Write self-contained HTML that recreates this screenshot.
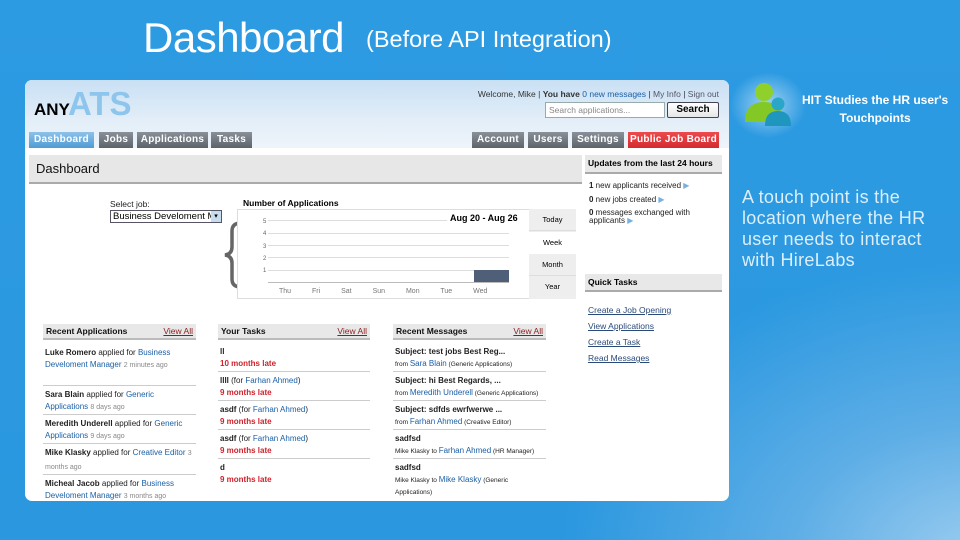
<!DOCTYPE html>
<html><head><meta charset="utf-8"><style>
*{margin:0;padding:0;box-sizing:border-box}
body{width:960px;height:540px;overflow:hidden;position:relative;font-family:"Liberation Sans",Arial,sans-serif;background:radial-gradient(ellipse 420px 300px at 980px 560px,#9ccdf0 0%,#5eaee6 45%,rgba(42,152,224,0) 100%),linear-gradient(180deg,#2d9be2 0%,#2a97df 100%)}
.a{position:absolute;white-space:nowrap}
.panel{position:absolute;left:25px;top:80px;width:704px;height:421px;background:#fff;border-radius:7px;overflow:hidden}
.hdr{position:absolute;left:0;top:0;width:704px;height:68px;background:linear-gradient(180deg,#c9e0f4 0%,#e3eef8 60%,#eef4fa 100%)}
.tab{position:absolute;top:52px;height:16px;color:#fff;font-weight:bold;font-size:10px;text-align:center;line-height:16px;background:linear-gradient(#8a9098,#5c636b);letter-spacing:.3px}
.s{font-size:8px;color:#222}
.lk{color:#1a5fa6}
.gr{color:#888;font-size:7px}
.rd{color:#d0202a;font-weight:bold;font-size:8px}
.bh{position:absolute;height:16px;background:#e8e8e8;border-bottom:2px solid #bbb;font-size:8.5px;font-weight:bold;line-height:15px;padding-left:3px;color:#111}
.bh u{position:absolute;right:3px;top:0;color:#8a1d1d;font-weight:normal}
.sep{position:absolute;height:1px;background:#ccc}
</style></head><body>
<div class="a" style="left:143px;top:14px;font-size:42px;color:#fff;font-weight:300;letter-spacing:-.5px">Dashboard</div>
<div class="a" style="left:366px;top:26px;font-size:23.5px;color:#fff">(Before API Integration)</div>

<div class="panel">
<div class="hdr"></div>
<div class="a" style="left:9px;top:20px;font-size:17px;font-weight:bold;color:#000">ANY</div>
<div class="a" style="left:43px;top:5px;font-size:33px;font-weight:bold;color:#8ec5ec">ATS</div>
<div class="a" style="right:10px;top:9px;font-size:8.5px;color:#333">Welcome, Mike | <b>You have</b> <span class="lk">0 new messages</span> | <span style="color:#556">My Info</span> | <span style="color:#556">Sign out</span></div>
<div class="a" style="left:520px;top:22px;width:120px;height:16px;border:1px solid #9aa;background:#fff;font-size:8.5px;color:#888;padding:2px 3px">Search applications...</div>
<div class="a" style="left:642px;top:22px;width:52px;height:16px;border:1px solid #445;border-radius:2px;background:linear-gradient(#fff,#e6e6e6);font-size:10px;font-weight:bold;text-align:center;line-height:14px">Search</div>
<div class="tab" style="left:4px;width:65px;background:linear-gradient(#8dc2ea,#4f9bd4)">Dashboard</div>
<div class="tab" style="left:74px;width:34px">Jobs</div>
<div class="tab" style="left:112px;width:71px">Applications</div>
<div class="tab" style="left:186px;width:41px">Tasks</div>
<div class="tab" style="left:447px;width:52px">Account</div>
<div class="tab" style="left:503px;width:40px">Users</div>
<div class="tab" style="left:547px;width:52px">Settings</div>
<div class="tab" style="left:603px;width:91px;background:linear-gradient(#ec4a4e,#d42a30)">Public Job Board</div>

<div class="a" style="left:4px;top:75px;width:553px;height:29px;background:#e7e7e7;border-bottom:2px solid #aaa;font-size:13px;line-height:27px;padding-left:7px;color:#111">Dashboard</div>
<div class="a" style="left:560px;top:75px;width:137px;height:19px;background:#e8e8e8;border-bottom:2px solid #aaa;font-size:8.5px;font-weight:bold;line-height:17px;padding-left:3px">Updates from the last 24 hours</div>
<div class="a s" style="left:564px;top:101px;font-size:8px"><b>1</b> new applicants received <span style="color:#7ab0e0">▶</span></div>
<div class="a s" style="left:564px;top:115px;font-size:8px"><b>0</b> new jobs created <span style="color:#7ab0e0">▶</span></div>
<div class="a s" style="left:564px;top:129px;font-size:8px;line-height:8px;white-space:normal;width:130px"><b>0</b> messages exchanged with applicants <span style="color:#7ab0e0">▶</span></div>

<div class="a s" style="left:85px;top:119px;font-size:8.5px">Select job:</div>
<div class="a" style="left:85px;top:130px;width:112px;height:13px;border:1px solid #556;font-size:9.5px;line-height:11px;padding-left:2px;background:#fff;overflow:hidden">Business Develoment M<span style="position:absolute;right:0;top:0;width:10px;height:11px;background:#c8dcf0;font-size:7px;text-align:center">▾</span></div>
<svg class="a" style="left:197px;top:141px" width="22" height="68" viewBox="0 0 22 68"><path d="M19 2 Q10 2 10 10 L10 26 Q10 33 3 34 Q10 35 10 42 L10 58 Q10 66 19 66" fill="none" stroke="#666" stroke-width="3.5"/></svg>
<div class="a" style="left:218px;top:118px;font-size:8.5px;font-weight:bold">Number of Applications</div>
<div class="a" style="left:212px;top:129px;width:339px;height:90px;border:1px solid #ddd;background:#fff"></div>
<div class="a" style="left:504px;top:129px;width:47px;height:90px;background:#eee"></div>
<div class="a" style="left:504px;top:129px;width:47px;height:22px;border-bottom:1px solid #ddd;font-size:7.5px;text-align:center;line-height:22px">Today</div>
<div class="a" style="left:504px;top:152px;width:47px;height:22px;background:#fff;font-size:7.5px;text-align:center;line-height:22px">Week</div>
<div class="a" style="left:504px;top:174px;width:47px;height:22px;border-bottom:1px solid #ddd;font-size:7.5px;text-align:center;line-height:22px">Month</div>
<div class="a" style="left:504px;top:196px;width:47px;height:22px;font-size:7.5px;text-align:center;line-height:22px">Year</div>
<div class="a" style="left:243px;top:140px;width:241px;height:1px;background:#ddd"></div>
<div class="a" style="left:243px;top:153px;width:241px;height:1px;background:#ddd"></div>
<div class="a" style="left:243px;top:165px;width:241px;height:1px;background:#ddd"></div>
<div class="a" style="left:243px;top:177px;width:241px;height:1px;background:#ddd"></div>
<div class="a" style="left:243px;top:190px;width:241px;height:1px;background:#ddd"></div>
<div class="a" style="left:243px;top:202px;width:241px;height:1px;background:#bbb"></div>
<div class="a" style="left:422px;top:133px;font-size:9px;font-weight:bold;background:#fff;padding:0 3px">Aug 20 - Aug 26</div>
<div class="a" style="left:449px;top:190px;width:35px;height:12px;background:#4f5f78"></div>
<div class="a" style="left:238px;top:136px;font-size:6px;color:#666;line-height:12.3px">5<br>4<br>3<br>2<br>1</div>
<div class="a" style="left:254px;top:208px;font-size:7px;color:#777;word-spacing:19px">Thu Fri Sat Sun Mon Tue Wed</div>

<div class="a" style="left:560px;top:194px;width:137px;height:18px;background:#e8e8e8;border-bottom:2px solid #aaa;font-size:8.5px;font-weight:bold;line-height:16px;padding-left:3px">Quick Tasks</div>
<div class="a" style="left:563px;top:222px;font-size:8.5px;color:#2a4a7a;line-height:16px"><u>Create a Job Opening</u><br><u>View Applications</u><br><u>Create a Task</u><br><u>Read Messages</u></div>

<div class="bh" style="left:18px;top:244px;width:153px">Recent Applications<u>View All</u></div>
<div class="bh" style="left:193px;top:244px;width:152px">Your Tasks<u>View All</u></div>
<div class="bh" style="left:368px;top:244px;width:153px">Recent Messages<u>View All</u></div>

<div class="a s" style="left:20px;top:267px;line-height:11.5px;white-space:normal;width:150px"><b>Luke Romero</b> applied for <span class="lk">Business Develoment Manager</span> <span class="gr">2 minutes ago</span></div>
<div class="sep" style="left:18px;top:305px;width:153px"></div>
<div class="a s" style="left:20px;top:309px;line-height:11.5px;white-space:normal;width:150px"><b>Sara Blain</b> applied for <span class="lk">Generic Applications</span> <span class="gr">8 days ago</span></div>
<div class="sep" style="left:18px;top:334px;width:153px"></div>
<div class="a s" style="left:20px;top:338px;line-height:11.5px;white-space:normal;width:150px"><b>Meredith Underell</b> applied for <span class="lk">Generic Applications</span> <span class="gr">9 days ago</span></div>
<div class="sep" style="left:18px;top:363px;width:153px"></div>
<div class="a s" style="left:20px;top:367px;line-height:12.5px;white-space:normal;width:150px"><b>Mike Klasky</b> applied for <span class="lk">Creative Editor</span> <span class="gr">3 months ago</span></div>
<div class="sep" style="left:18px;top:394px;width:153px"></div>
<div class="a s" style="left:20px;top:398px;line-height:11.5px;white-space:normal;width:150px"><b>Micheal Jacob</b> applied for <span class="lk">Business Develoment Manager</span> <span class="gr">3 months ago</span></div>

<div class="a s" style="left:195px;top:266px;line-height:11.5px"><b>ll</b><br><span class="rd">10 months late</span></div>
<div class="sep" style="left:193px;top:291px;width:152px"></div>
<div class="a s" style="left:195px;top:295px;line-height:11.5px"><b>llll</b> (for <span class="lk">Farhan Ahmed</span>)<br><span class="rd">9 months late</span></div>
<div class="sep" style="left:193px;top:320px;width:152px"></div>
<div class="a s" style="left:195px;top:324px;line-height:11.5px"><b>asdf</b> (for <span class="lk">Farhan Ahmed</span>)<br><span class="rd">9 months late</span></div>
<div class="sep" style="left:193px;top:349px;width:152px"></div>
<div class="a s" style="left:195px;top:353px;line-height:11.5px"><b>asdf</b> (for <span class="lk">Farhan Ahmed</span>)<br><span class="rd">9 months late</span></div>
<div class="sep" style="left:193px;top:378px;width:152px"></div>
<div class="a s" style="left:195px;top:382px;line-height:11.5px"><b>d</b><br><span class="rd">9 months late</span></div>

<div class="a s" style="left:370px;top:266px;line-height:11.5px"><b>Subject: test jobs Best Reg...</b><br><span style="font-size:6.5px">from <span class="lk" style="font-size:8px">Sara Blain</span> (Generic Applications)</span></div>
<div class="sep" style="left:368px;top:291px;width:153px"></div>
<div class="a s" style="left:370px;top:295px;line-height:11.5px"><b>Subject: hi Best Regards, ...</b><br><span style="font-size:6.5px">from <span class="lk" style="font-size:8px">Meredith Underell</span> (Generic Applications)</span></div>
<div class="sep" style="left:368px;top:320px;width:153px"></div>
<div class="a s" style="left:370px;top:324px;line-height:11.5px"><b>Subject: sdfds ewrfwerwe ...</b><br><span style="font-size:6.5px">from <span class="lk" style="font-size:8px">Farhan Ahmed</span> (Creative Editor)</span></div>
<div class="sep" style="left:368px;top:349px;width:153px"></div>
<div class="a s" style="left:370px;top:353px;line-height:11.5px"><b>sadfsd</b><br><span style="font-size:6.5px">Mike Klasky to <span class="lk" style="font-size:8px">Farhan Ahmed</span> (HR Manager)</span></div>
<div class="sep" style="left:368px;top:378px;width:153px"></div>
<div class="a s" style="left:370px;top:382px;line-height:11.5px;white-space:normal;width:150px"><b>sadfsd</b><br><span style="font-size:6.5px">Mike Klasky to <span class="lk" style="font-size:8px">Mike Klasky</span> (Generic Applications)</span></div>
</div>

<div class="a" style="left:730px;top:72px;width:76px;height:66px;background:radial-gradient(ellipse at center,rgba(255,255,255,.55) 0%,rgba(255,255,255,0) 70%)"></div>
<svg class="a" style="left:742px;top:80px" width="52" height="48" viewBox="0 0 52 48">
<circle cx="22" cy="12" r="9" fill="#8fd12a"/><path d="M3 42 Q3 22 22 22 Q39 22 40 36 L40 42 Z" fill="#84c826"/>
<circle cx="36" cy="24" r="6.5" fill="#2aa6c8"/><path d="M23 46 Q23 31 36 31 Q49 31 49 46 Z" fill="#1e96bd"/>
</svg>
<div class="a" style="left:802px;top:91px;font-size:12px;font-weight:bold;color:#fff;text-align:center;line-height:18px">HIT Studies the HR user's<br>Touchpoints</div>
<div class="a" style="left:742px;top:187px;font-size:18px;color:#dceefa;line-height:21px;letter-spacing:.3px">A touch point is the<br>location where the HR<br>user needs to interact<br>with HireLabs</div>
</body></html>
